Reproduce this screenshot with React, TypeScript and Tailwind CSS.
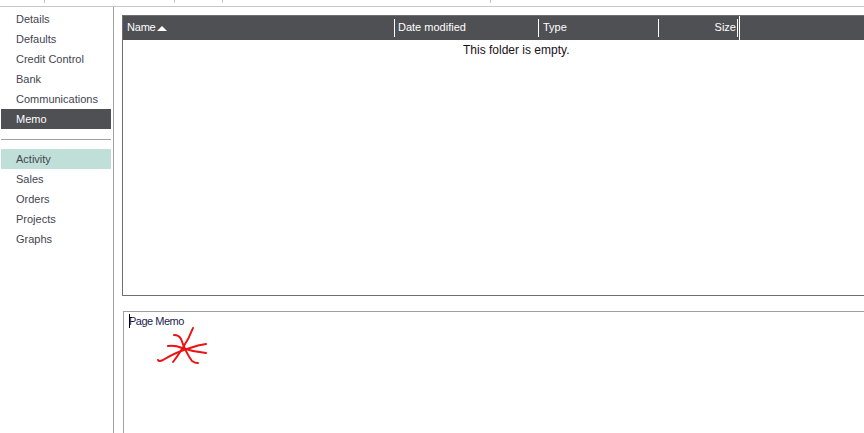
const top = [45, 130, 48, 268];
const nav1 = ["Details", "Defaults", "Credit Control", "Bank", "Communications"];
const nav2 = ["Sales", "Orders", "Projects", "Graphs"];

function NavItem({ label, className = "text-[#43454f]" }: { label: string; className?: string }) {
  return <div className={`h-5 pl-[15px] leading-5 ${className}`}>{label}</div>;
}

export default function App() {
  return (
    <div className="h-[433px] w-[864px] overflow-hidden bg-white font-['Liberation_Sans',Arial,sans-serif] text-[11px]">
      <div className="flex h-[3px]">
        {top.map((w, i) => (
          <div key={i} style={{ width: w }} className="border-r border-[#c8c8c8]" />
        ))}
      </div>
      <div className="mt-[3px] h-[1px] bg-[#c8c8c8]" />
      <div className="flex h-[426px]">
        <div className="w-[114px] shrink-0 border-r border-[#a0a0a0] pt-[2px] pr-[2px] pl-[1px]">
          {nav1.map((n) => (
            <NavItem key={n} label={n} />
          ))}
          <NavItem label="Memo" className="bg-[#4f5054] text-white" />
          <div className="mt-[10px] mb-[9px] h-[1px] bg-[#a0a0a0]" />
          <NavItem label="Activity" className="bg-[#c0dfd9] text-[#43454f]" />
          {nav2.map((n) => (
            <NavItem key={n} label={n} />
          ))}
        </div>
        <div className="flex-1 pt-[8px] pl-[8px]">
          <div className="h-[281px] border border-r-0 border-[#6f6f6f]">
            <div className="flex h-[24px] items-center bg-[#4f5054] text-white">
              <div className="flex h-[18px] w-[272px] items-center border-r border-white pb-[2px] pl-[4px]">
                <span className="tracking-[-0.2px]">Name</span>
                <svg width="10" height="5" className="mt-[2px] ml-[1px]" viewBox="0 0 10 5">
                  <path d="M5 0 L10 5 L0 5 Z" fill="#fff" />
                </svg>
              </div>
              <div className="flex h-[18px] w-[144px] items-center border-r border-white pb-[2px] pl-[3px]">Date modified</div>
              <div className="flex h-[18px] w-[120px] items-center border-r border-white pb-[2px] pl-[4px]">Type</div>
              <div className="flex h-[18px] w-[79px] items-center justify-end border-r border-white pr-[1px] pb-[2px]">Size</div>
              <div className="ml-[1px] h-[24px] w-[1px] bg-white" />
            </div>
            <div className="pt-[2px] pl-[340px] text-[12px] leading-[16px] text-[#1a1020]">This folder is empty.</div>
          </div>
          <div className="relative mt-[15px] ml-[1px] h-[130px] border border-r-0 border-b-0 border-[#a0a0a0] pt-[1px] pl-[5px] leading-[16px] tracking-[-0.5px] text-[#1c1c50]">
            Page Memo
            <div className="absolute top-[2px] left-[5px] h-[14px] w-[1px] bg-black" />
            <div className="absolute top-[5px] left-[5px] h-[1px] w-[3px] bg-black" />
            <svg className="absolute top-0 left-0" width="120" height="70" viewBox="124 312 120 70" fill="none" stroke="#ee1111" strokeWidth="2" strokeLinecap="round" strokeLinejoin="round">
              <path d="M193 328 Q189 339 182 349 Q177 357 173 362" />
              <path d="M174 335 Q179 335 181 339 Q186 353 192 361 Q195 363 198 363" />
              <path d="M168 346 Q175 345 182 348 Q194 352 206 353" />
              <path d="M158 360 Q159 362 163 360 Q176 352 190 348 Q198 345 206 344" />
            </svg>
          </div>
        </div>
      </div>
    </div>
  );
}
